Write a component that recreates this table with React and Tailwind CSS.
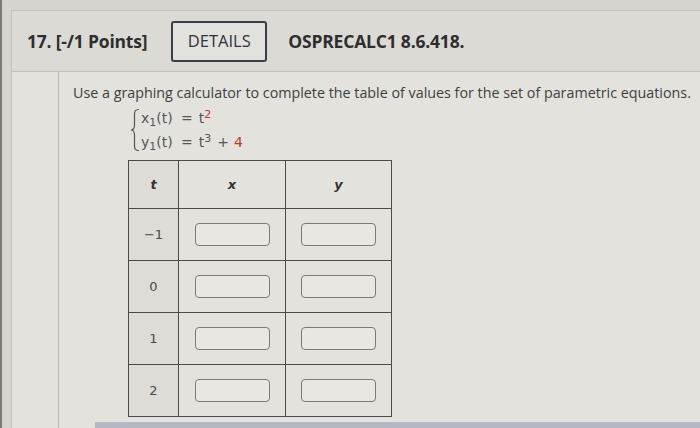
import React from "react";

const rows = ["−1", "0", "1", "2"];

const AnswerBox = () => (
  <div className="mx-auto h-[23px] w-[75px] rounded-[4px] border-[1.5px] border-[#7a7a78] bg-[#e9e7e2]" />
);

const Brace = () => (
  <svg width="10" height="44" viewBox="0 0 10 44" className="shrink-0">
    <path
      d="M9 1.5 C5 1.5 4.5 3 4.5 7 L4.5 17 C4.5 20.5 3 22 1 22 C3 22 4.5 23.5 4.5 27 L4.5 37 C4.5 41 5 42.5 9 42.5"
      fill="none"
      stroke="#555"
      strokeWidth="1.2"
    />
  </svg>
);

export default function App() {
  return (
    <div
      className="relative h-[428px] w-[700px] overflow-hidden bg-[#d6d4cf] pl-[11px] pt-[10px]"
      style={{ fontFamily: "'Open Sans', 'DejaVu Sans', sans-serif" }}
    >
      <div className="absolute left-0 top-0 h-full w-[2px] bg-[#7d7b77]" />
      <div className="flex h-full flex-col border-l border-t border-[#c4c2bd] bg-[#e4e2dd]">
        {/* question header */}
        <div className="flex h-[61px] shrink-0 items-center border-b border-[#c4c2bd] bg-[#dcdad5] pl-[15px]">
          <span className="text-[17.5px] font-bold tracking-[-0.2px] text-[#2e2e2e]">
            17. [-/1 Points]
          </span>
          <div className="ml-[24px] flex h-[41px] w-[96px] items-center justify-center rounded-[3px] border-2 border-[#3a3f47] bg-[#e3e1dc]">
            <span className="text-[16.5px] text-[#2e3440]">DETAILS</span>
          </div>
          <span className="ml-[21px] text-[17.5px] font-bold tracking-[-0.2px] text-[#2e2e2e]">
            OSPRECALC1 8.6.418.
          </span>
        </div>

        {/* question body */}
        <div className="flex flex-1">
          <div className="w-[47px] shrink-0 border-r border-[#b9b7b2]" />
          <div className="flex-1 pl-[14px] pt-[10px]">
            <p className="whitespace-nowrap text-[14.3px] text-[#3f3f3f]">
              Use a graphing calculator to complete the table of values for the set of
              parametric equations.
            </p>

            <div
              className="ml-[57px] mt-[3px] flex items-center gap-[1px] text-[14px] text-[#555]"
              style={{ fontFamily: "'DejaVu Sans', sans-serif" }}
            >
              <Brace />
              <div className="flex flex-col leading-[24px]">
                <div className="flex items-baseline">
                  <span className="w-[36px]">
                    x<sub className="text-[11px]">1</sub>(t)
                  </span>
                  <span className="ml-[4px]">=</span>
                  <span className="ml-[6px]">
                    t<sup className="text-[11px] text-[#c0392b]">2</sup>
                  </span>
                </div>
                <div className="flex items-baseline">
                  <span className="w-[36px]">
                    y<sub className="text-[11px]">1</sub>(t)
                  </span>
                  <span className="ml-[4px]">=</span>
                  <span className="ml-[6px]">
                    t<sup className="text-[11px]">3</sup>
                  </span>
                  <span className="ml-[6px]">+</span>
                  <span className="ml-[5px] text-[#c0392b]">4</span>
                </div>
              </div>
            </div>

            <table
              className="ml-[55px] mt-[6px] border-collapse text-[13px] text-[#4a4a4a]"
              style={{ fontFamily: "'DejaVu Sans', sans-serif" }}
            >
              <thead>
                <tr className="h-[48px]">
                  <th className="w-[50px] border border-[#4a4a4a] bg-[#dedcd7] text-[13px] font-bold italic text-[#333]">
                    t
                  </th>
                  <th className="w-[107px] border border-[#4a4a4a] text-[13px] font-bold italic text-[#333]">
                    x
                  </th>
                  <th className="w-[106px] border border-[#4a4a4a] text-[13px] font-bold italic text-[#333]">
                    y
                  </th>
                </tr>
              </thead>
              <tbody>
                {rows.map((t) => (
                  <tr key={t} className="h-[52px]">
                    <td className="border border-[#4a4a4a] bg-[#dedcd7] text-center">{t}</td>
                    <td className="border border-[#4a4a4a]">
                      <AnswerBox />
                    </td>
                    <td className="border border-[#4a4a4a]">
                      <AnswerBox />
                    </td>
                  </tr>
                ))}
              </tbody>
            </table>
          </div>
        </div>
      </div>
      <div className="absolute bottom-0 left-[95px] h-[6px] w-[605px] bg-[#b4b8c2]" />
    </div>
  );
}
